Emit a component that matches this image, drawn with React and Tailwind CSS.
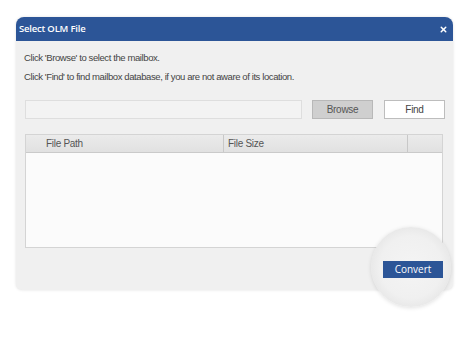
import { X } from 'lucide-react'

const App = () => {
  return (
    <div className="w-[474px] h-[351px] bg-white overflow-hidden pt-[17px] pl-[16px] relative" style={{ fontFamily: '"Liberation Sans", Arial, sans-serif' }}>
      {/* Dialog */}
      <div className="w-[437px] h-[273px] flex flex-col rounded-t-[8px] rounded-b-[6px] bg-[#f0f0f0] shadow-[0_0_3px_rgba(0,0,0,0.12)] overflow-hidden">
        {/* Title bar */}
        <div className="h-[24px] bg-[#2c5597] flex items-center justify-between pl-[3px] pr-[5px]">
          <span className="text-white text-[9.5px] font-semibold tracking-[-0.2px]" style={{ fontFamily: '"Open Sans", sans-serif' }}>Select OLM File</span>
          <X className="w-[9px] h-[9px] text-white" strokeWidth={4} />
        </div>

        {/* Body */}
        <div className="flex-1 flex flex-col pl-[8px] pr-[8px] text-[#444]">
          <p className="text-[9.5px] leading-[14px] mt-[10px] tracking-[-0.4px]">Click 'Browse' to select the mailbox.</p>
          <p className="text-[9.5px] leading-[14px] mt-[5px] tracking-[-0.4px]">Click 'Find' to find mailbox database, if you are not aware of its location.</p>

          <div className="flex mt-[16px] h-[19px] pl-[1px]">
            <div className="w-[277px] h-full bg-[#f3f3f3] border border-[#dedede]"></div>
            <button className="ml-[10px] w-[61px] h-full bg-[#cfcfcf] border border-[#b8b8b8] text-[10px] text-[#555] tracking-[-0.3px]">Browse</button>
            <button className="ml-[11px] w-[61px] h-full bg-white border border-[#bdbdbd] text-[10px] text-[#444] tracking-[-0.3px]">Find</button>
          </div>

          {/* Table */}
          <div className="mt-[15px] ml-[1px] w-[418px] h-[114px] border border-[#d4d4d4] bg-[#fbfbfb] flex flex-col">
            <div className="h-[18px] flex bg-gradient-to-b from-[#ebebeb] to-[#e1e1e1] border-b border-[#cacaca] text-[10px] text-[#555] tracking-[-0.3px]">
              <div className="w-[198px] pl-[20px] flex items-center border-r border-[#c8c8c8]">File Path</div>
              <div className="w-[184px] pl-[4px] flex items-center border-r border-[#c8c8c8]">File Size</div>
              <div className="flex-1"></div>
            </div>
            <div className="flex-1"></div>
          </div>

          <div className="flex justify-end mt-[13px] pr-[2px]">
            <button className="relative z-10 w-[60px] h-[17px] bg-[#2c5597] text-white text-[10px]" style={{ fontFamily: '"Open Sans", sans-serif' }}>Convert</button>
          </div>
        </div>
      </div>

      {/* Magnifier circle */}
      <div className="absolute left-[371px] top-[227px] w-[80px] h-[80px] rounded-full bg-[radial-gradient(circle,#f4f4f4_0%,#f0f0f0_55%,#e2e2e2_85%,#d6d6d6_100%)] shadow-[0_1px_4px_rgba(0,0,0,0.12)]"></div>
    </div>
  )
}

export default App
